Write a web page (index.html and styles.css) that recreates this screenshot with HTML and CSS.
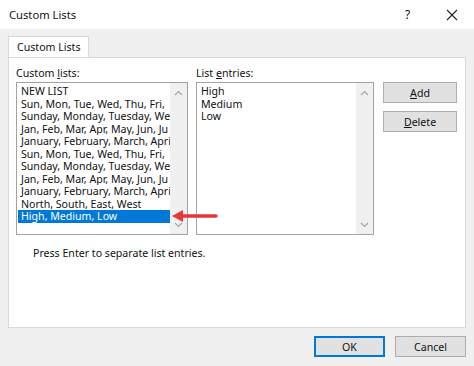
FILE: index.html
```html
<!DOCTYPE html>
<html lang="en">
<head>
    <meta charset="UTF-8">
    <title>Custom Lists</title>
    <link rel="stylesheet" href="styles.css">
</head>
<body>

    <!-- Title bar -->
    <div class="titlebar">
        <span class="title">Custom Lists</span>
        <span class="help">?</span>
        <span class="close">
            <svg width="12" height="12" viewBox="0 0 12 12"><path d="M1 1L11 11M11 1L1 11" stroke="#222" stroke-width="1.1" fill="none"/></svg>
        </span>
    </div>

    <div class="dialog">
        <div class="tabs">
            <div class="tab">Custom Lists</div>
        </div>

        <div class="panel">
            <div class="columns">
                <div class="col">
                    <div class="label">Custom <u>l</u>ists:</div>
                    <div class="listbox left-box">
                        <ul class="items">
                            <li>NEW LIST</li>
                            <li>Sun, Mon, Tue, Wed, Thu, Fri,</li>
                            <li>Sunday, Monday, Tuesday, We</li>
                            <li>Jan, Feb, Mar, Apr, May, Jun, Ju</li>
                            <li>January, February, March, Apri</li>
                            <li>Sun, Mon, Tue, Wed, Thu, Fri,</li>
                            <li>Sunday, Monday, Tuesday, We</li>
                            <li>Jan, Feb, Mar, Apr, May, Jun, Ju</li>
                            <li>January, February, March, Apri</li>
                            <li>North, South, East, West</li>
                            <li class="selected">High, Medium, Low</li>
                        </ul>
                        <div class="scrollbar">
                            <svg width="9" height="6" viewBox="0 0 9 6"><path d="M1 5L4.5 1.5L8 5" stroke="#a6a6a6" stroke-width="1.2" fill="none"/></svg>
                            <svg width="9" height="6" viewBox="0 0 9 6"><path d="M1 1L4.5 4.5L8 1" stroke="#a6a6a6" stroke-width="1.2" fill="none"/></svg>
                        </div>
                    </div>
                </div>
                <div class="col">
                    <div class="label">List <u>e</u>ntries:</div>
                    <div class="listbox right-box">
                        <ul class="items">
                            <li>High</li>
                            <li>Medium</li>
                            <li>Low</li>
                        </ul>
                        <div class="scrollbar">
                            <svg width="9" height="6" viewBox="0 0 9 6"><path d="M1 5L4.5 1.5L8 5" stroke="#a6a6a6" stroke-width="1.2" fill="none"/></svg>
                            <svg width="9" height="6" viewBox="0 0 9 6"><path d="M1 1L4.5 4.5L8 1" stroke="#a6a6a6" stroke-width="1.2" fill="none"/></svg>
                        </div>
                    </div>
                </div>
                <div class="side-buttons">
                    <button class="btn"><u>A</u>dd</button>
                    <button class="btn"><u>D</u>elete</button>
                </div>
            </div>

            <p class="note">Press Enter to separate list entries.</p>

            <!-- red pointer -->
            <svg class="pointer" width="46" height="14" viewBox="0 0 46 14">
                <path d="M9 7H44" stroke="#e8363c" stroke-width="3.5" stroke-linecap="round"/>
                <path d="M0 7L11 1V13Z" fill="#e8363c"/>
            </svg>
        </div>

        <div class="footer">
            <button class="btn default">OK</button>
            <button class="btn">Cancel</button>
        </div>
    </div>

</body>
</html>
```
FILE: styles.css
```css
body {
    margin: 0;
    background-color: #f0f0f0;
    font-family: "Noto Sans", "Open Sans", sans-serif;
    font-size: 10.6px;
    color: #111111;
}
/* Title bar */
.titlebar {
    height: 29px;
    background-color: #ffffff;
    display: flex;
    align-items: center;
    padding-left: 9px;
}
.title {
    font-size: 11.2px;
    flex: 1;
}
.help {
    font-size: 12px;
    width: 45px;
    text-align: center;
}
.close {
    width: 44px;
    display: flex;
    justify-content: center;
}
.dialog {
    padding: 7px 8px 0 8px;
}
/* Tabs */
.tabs {
    display: flex;
    height: 21px;
}
.tab {
    background-color: #ffffff;
    border: 1px solid #d9d9d9;
    border-bottom: none;
    padding: 0 8px;
    line-height: 21px;
    white-space: nowrap;
}
.panel {
    position: relative;
    background-color: #ffffff;
    border: 1px solid #d9d9d9;
    height: 261px;
    padding: 8px 7px 0 7px;
}
.columns {
    display: flex;
    gap: 8px;
}
.label {
    height: 16px;
    line-height: 14px;
}
.listbox {
    display: flex;
    border: 1px solid #a3a3a3;
    height: 151px;
    background-color: #ffffff;
}
.left-box {
    width: 170px;
}
.right-box {
    width: 176px;
}
.items {
    list-style: none;
    margin: 0;
    padding: 2px 0 0 1px;
    flex: 1;
    overflow: hidden;
}
.items li {
    height: 12.5px;
    line-height: 12.5px;
    padding-left: 3px;
    white-space: nowrap;
    overflow: hidden;
}
.items li.selected {
    background-color: #0078d7;
    color: #ffffff;
}
.scrollbar {
    width: 17px;
    background-color: #f0f0f0;
    display: flex;
    flex-direction: column;
    justify-content: space-between;
    align-items: center;
    padding: 7px 0 6px 0;
}
.side-buttons {
    display: flex;
    flex-direction: column;
    gap: 8px;
    padding-top: 16px;
    margin-left: 1px;
}
.btn {
    font-family: "Noto Sans", "Open Sans", sans-serif;
    font-size: 10.6px;
    color: #111111;
    background-color: #e1e1e1;
    border: 1px solid #adadad;
    width: 74px;
    height: 21px;
    padding: 0;
}
.note {
    margin: 11px 0 0 17px;
}
.pointer {
    position: absolute;
    left: 163px;
    top: 151px;
}
/* Footer */
.footer {
    display: flex;
    justify-content: flex-end;
    gap: 10px;
    padding-top: 8px;
}
.footer .btn {
    width: 71px;
}
.btn.default {
    border: 2px solid #0078d7;
}
```
